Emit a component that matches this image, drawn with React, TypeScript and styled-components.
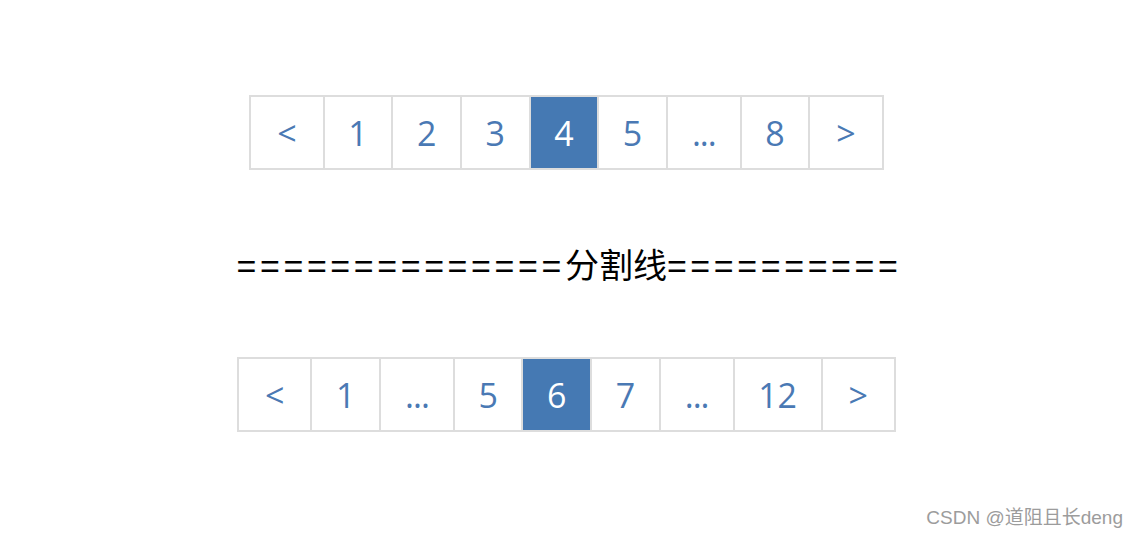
import React from "react";
import styled, { createGlobalStyle } from "styled-components";

const GlobalStyle = createGlobalStyle`
  html, body {
    margin: 0;
    padding: 0;
    background: #ffffff;
  }
  body {
    font-family: "Open Sans", "Noto Sans", sans-serif;
  }
`;

const Page = styled.div`
  position: relative;
  width: 1138px;
  height: 538px;
  box-sizing: border-box;
  padding-top: 95px;
  display: flex;
  flex-direction: column;
  align-items: center;
  overflow: hidden;
`;

const Pager = styled.ul<{ $gap: number }>`
  list-style: none;
  margin: ${(p) => p.$gap}px 5px 0 0;
  padding: 0;
  display: flex;
`;

type Kind = "page" | "arrow" | "more";

const Item = styled.li<{ $active?: boolean; $kind: Kind }>`
  box-sizing: border-box;
  height: 75px;
  display: flex;
  align-items: center;
  justify-content: center;
  padding: 0 ${(p) => (p.$kind === "arrow" ? 26 : p.$kind === "more" ? 24 : 23.6)}px;
  border: 2px solid #dddddd;
  margin-left: -2px;
  font-family: "Open Sans", "Noto Sans", sans-serif;
  font-size: 34px;
  letter-spacing: ${(p) => (p.$kind === "more" ? "-1px" : "0")};
  color: ${(p) => (p.$active ? "#ffffff" : "#4a79b4")};
  background: ${(p) => (p.$active ? "#4579b3" : "#ffffff")};
  cursor: pointer;
  user-select: none;

  &:first-child {
    margin-left: 0;
  }
`;

const Divider = styled.div`
  margin-top: 77px;
  height: 34px;
  line-height: 34px;
  font-size: 34px;
  color: #000000;
  white-space: nowrap;
`;

const Equals = styled.span`
  font-family: "Liberation Sans", Arial, sans-serif;
  letter-spacing: 3.6px;
`;

const Label = styled.span`
  font-family: "Noto Sans CJK SC", "Noto Sans", sans-serif;
`;

const Watermark = styled.div`
  position: absolute;
  right: 15px;
  bottom: 9px;
  font-family: "Liberation Sans", Arial, "Noto Sans CJK SC", sans-serif;
  font-size: 19px;
  color: #9c9c9c;
  white-space: nowrap;
`;

type Cell = { label: string; kind: Kind; active?: boolean };

const toCells = (labels: string[], current: string): Cell[] =>
  labels.map((label) => ({
    label,
    kind: label === "<" || label === ">" ? "arrow" : label === "..." ? "more" : "page",
    active: label === current,
  }));

const first = toCells(["<", "1", "2", "3", "4", "5", "...", "8", ">"], "4");
const second = toCells(["<", "1", "...", "5", "6", "7", "...", "12", ">"], "6");

function Pagination({ cells, gap }: { cells: Cell[]; gap: number }) {
  return (
    <Pager $gap={gap}>
      {cells.map((c, i) => (
        <Item key={i} $kind={c.kind} $active={c.active}>
          {c.label}
        </Item>
      ))}
    </Pager>
  );
}

export default function App() {
  return (
    <>
      <GlobalStyle />
      <Page>
        <Pagination cells={first} gap={0} />
        <Divider>
          <Equals>{"=".repeat(14)}</Equals>
          <Label>分割线</Label>
          <Equals>{"=".repeat(10)}</Equals>
        </Divider>
        <Pagination cells={second} gap={76} />
        <Watermark>CSDN @道阻且长deng</Watermark>
      </Page>
    </>
  );
}
